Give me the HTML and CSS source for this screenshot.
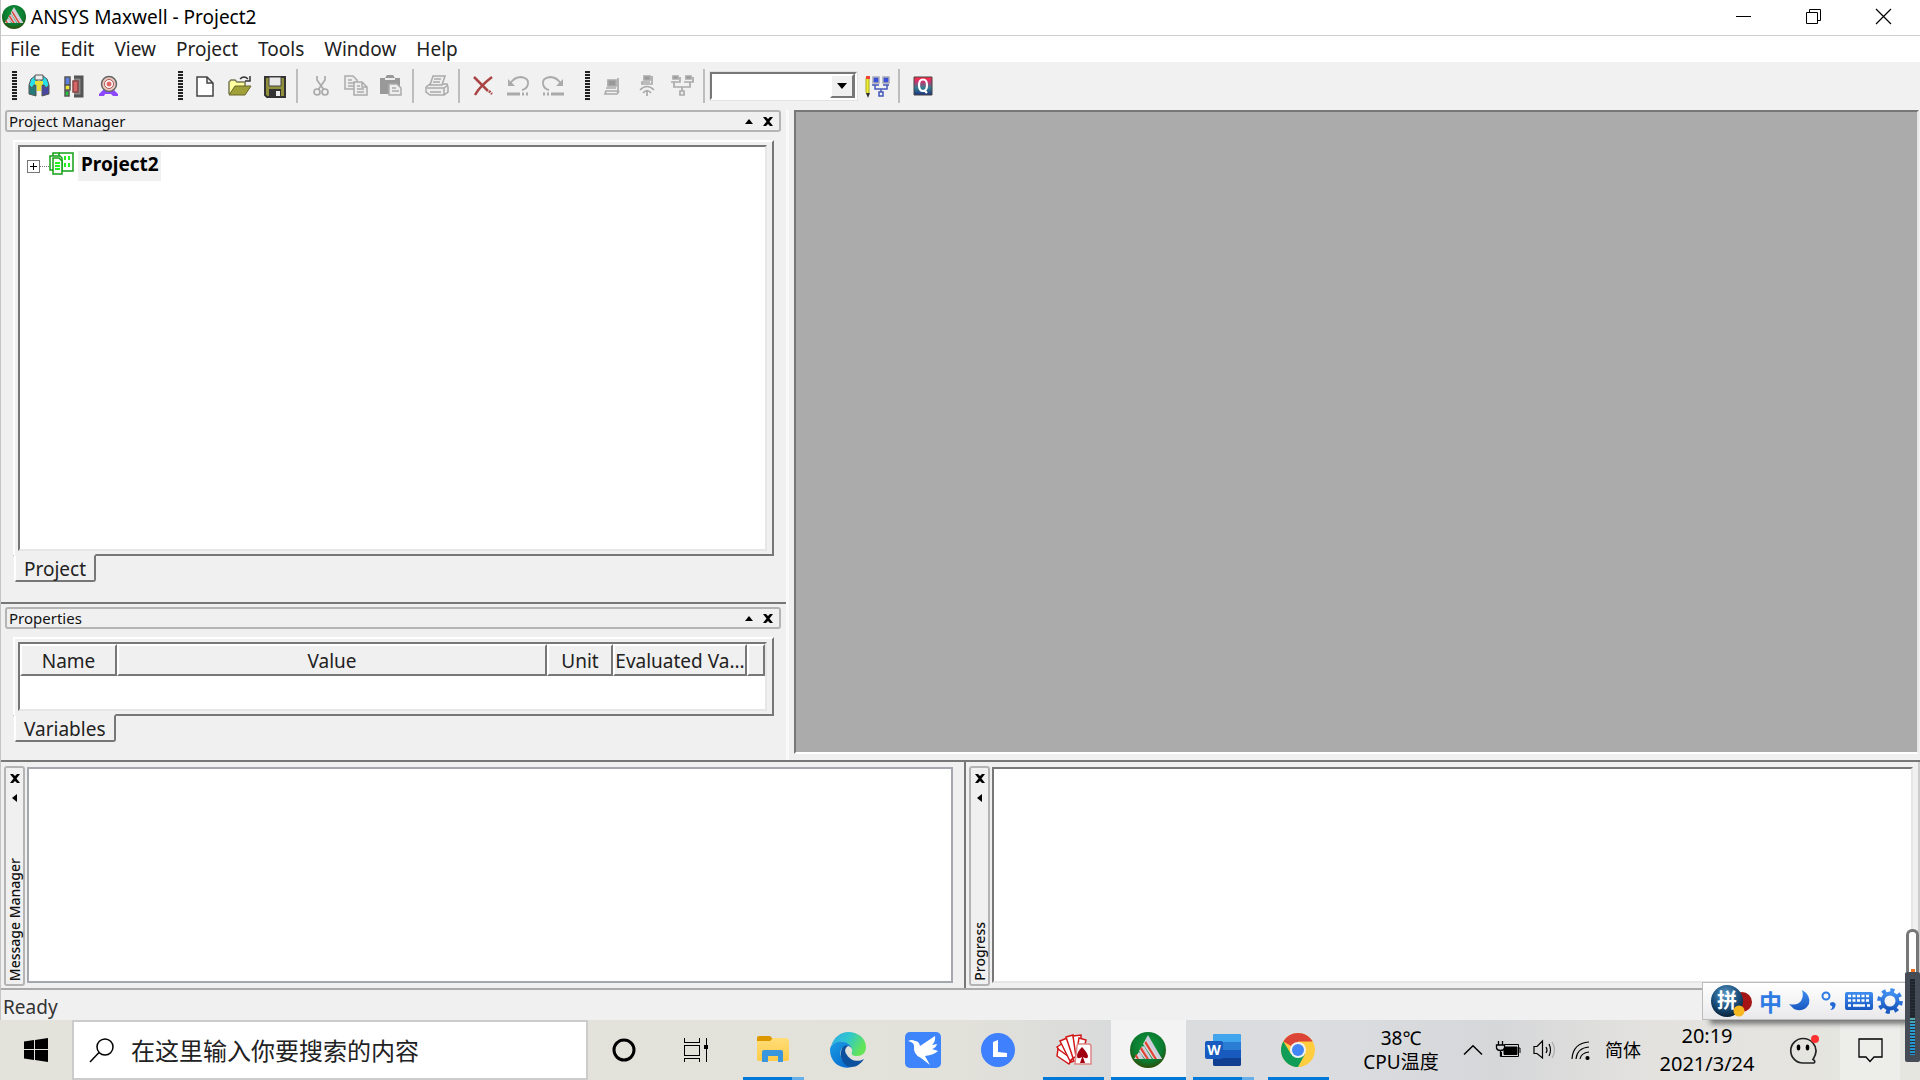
FILE: index.html
```html
<!DOCTYPE html>
<html lang="zh-CN">
<head>
<meta charset="utf-8">
<meta name="viewport" content="width=device-width, initial-scale=1">
<title>ANSYS Maxwell - Project2</title>
<link rel="stylesheet" href="styles.css">
</head>
<body>
<svg class="defs" aria-hidden="true">
  <defs>
    <radialGradient id="green" cx=".5" cy=".4" r=".6"><stop offset="0" stop-color="#0c9a3c"/><stop offset=".7" stop-color="#0b7a30"/><stop offset="1" stop-color="#2c4f08"/></radialGradient>
    <linearGradient id="edgeTop" x1="0" y1="0" x2="1" y2=".4"><stop offset="0" stop-color="#2fa8e8"/><stop offset=".5" stop-color="#2fc6cf"/><stop offset="1" stop-color="#63e457"/></linearGradient>
    <linearGradient id="edgeSide" x1="0" y1="0" x2=".6" y2="1"><stop offset="0" stop-color="#1a9de4"/><stop offset="1" stop-color="#0a6fd0"/></linearGradient>
    <linearGradient id="folder" x1="0" y1="0" x2="0" y2="1"><stop offset="0" stop-color="#ffdd78"/><stop offset="1" stop-color="#ffcb48"/></linearGradient>
    <radialGradient id="ball" cx=".45" cy=".3" r=".7"><stop offset="0" stop-color="#5a9bc8"/><stop offset=".6" stop-color="#1b4f7c"/><stop offset="1" stop-color="#0a2238"/></radialGradient>
    <linearGradient id="imeBlue" x1="0" y1="0" x2="0" y2="1"><stop offset="0" stop-color="#3f8df0"/><stop offset="1" stop-color="#1858c0"/></linearGradient>
    <linearGradient id="qbox" x1="0" y1="0" x2="0" y2="1"><stop offset="0" stop-color="#ff3040"/><stop offset=".25" stop-color="#d03070"/><stop offset=".6" stop-color="#308090"/><stop offset="1" stop-color="#203080"/></linearGradient>
    <symbol id="maxwell" viewBox="0 0 36 36">
      <circle cx="18" cy="18" r="18" fill="url(#green)"/>
      <path d="M4 27 9 20 13 27Z" fill="#d8d8dc"/>
      <path d="M9 19 12 14 21 27H15Z" fill="#d8d8dc"/>
      <path d="M13 12 17 5 32 27H23Z" fill="#d8d8dc"/>
      <path d="M8 21 10.500 20.500 14 27H11Z M12 15 14 14 22 27H19Z M16 7 18 3 32 27H29Z" fill="#ccd"/>
      <path d="M5 24 6.500 22 9 27H7Z M10 17 11.500 15 19 27H16.500Z M14.500 11 16 9 27 27H24.500Z" fill="#e04434"/>
    </symbol>
    <symbol id="close" viewBox="0 0 10 9"><path d="M0 0H3L5 2 7 0H10L6.500 4.500 10 9H7L5 7 3 9H0L3.500 4.500Z"/></symbol>
  </defs>
</svg>

<div class="window">
  <header class="titlebar">
    <svg class="app-icon" viewBox="0 0 36 36"><use href="#maxwell"/></svg>
    <h1 class="title">ANSYS Maxwell - Project2</h1>
    <div class="caption">
      <button class="cap" aria-label="Minimize"><svg width="15" height="15"><path d="M0 7.500H15" stroke="#000"/></svg></button>
      <button class="cap" aria-label="Restore"><svg width="15" height="15" fill="none" stroke="#000"><path d="M.5 3.500H11.500V14.500H.5ZM3.500 3V.5H14.500V11.500H12"/></svg></button>
      <button class="cap" aria-label="Close"><svg width="15" height="15"><path d="M0 0 15 15M15 0 0 15" stroke="#000" stroke-width="1.200"/></svg></button>
    </div>
  </header>

  <nav class="menubar">
    <button>File</button><button>Edit</button><button>View</button><button>Project</button><button>Tools</button><button>Window</button><button>Help</button>
  </nav>

  <div class="toolbar">
    <div class="group group-first">
      <span class="grip"></span>
      <button class="tool" aria-label="Find"><svg width="24" height="24" stroke="#555"><path d="M2 11V20L9 22V11Z" fill="#267a7a"/><path d="M15 11V22L22 20V11Z" fill="#4848a0"/><path d="M4 5 8 2 10 4V11H7L5 14 2 11Z" fill="#27dfe8"/><path d="M20 5 16 2 14 4V11H17L19 14 22 11Z" fill="#27dfe8"/><path d="M8 7H16V10L14 12V17H10V12L8 10Z" fill="#e5e138" stroke="none"/><path d="M8 1H16V6H8Z" fill="#eee"/></svg></button>
      <button class="tool" aria-label="Library"><svg width="24" height="24" stroke="#555" stroke-width="1.500"><path d="M12 3H20V22H12" fill="#888" stroke-width="3"/><path d="M3 3H8V11H3Z" fill="#5c80e0"/><path d="M3 11H8V16H3Z" fill="#eee63a"/><path d="M3 17H7V22H3Z" fill="#24cc38"/><path d="M11 7H16V18H11Z" fill="#d86868" stroke="#844"/></svg></button>
      <button class="tool" aria-label="Certificate"><svg width="24" height="24"><path d="M7 15 2 20V22H7L8 20H14L16 22H21V20L16 15Z" fill="#8b48ff"/><circle cx="12" cy="10" r="7.500" fill="#e9c8bf" stroke="#666" stroke-width="1.500"/><circle cx="12" cy="10" r="4.500" fill="#fff" stroke="#a55"/><circle cx="12" cy="10" r="2.500" fill="#e06868"/></svg></button>
    </div>
    <div class="group">
      <span class="grip"></span>
      <button class="tool" aria-label="New"><svg width="24" height="24"><path d="M4 3H14L20 9V22H4ZM14 3V9H20" fill="#fff" stroke="#444" stroke-width="1.500"/></svg></button>
      <button class="tool" aria-label="Open"><svg width="24" height="24"><path d="M1 20V8L3 6H7L9 8H17V12" fill="#ffffa0" stroke="#777755" stroke-width="1.500"/><path d="M1 21 7 12H23L17 21Z" fill="#a0a038" stroke="#666628"/><path d="M12 5Q16 1 20 5M22 2V7H17" fill="none" stroke="#333" stroke-width="1.500"/></svg></button>
      <button class="tool" aria-label="Save"><svg width="24" height="24"><path d="M2 3H22V23H4L2 21Z" fill="#90903c" stroke="#333" stroke-width="2"/><path d="M6 3H18V12H6Z" fill="#e9e9e9" stroke="#444"/><path d="M6 15H18V23H6Z" fill="#333"/><path d="M13 17H17V22H13Z" fill="#eee"/></svg></button>
      <span class="sep"></span>
      <button class="tool" aria-label="Cut"><svg width="24" height="24" fill="none" stroke="#aaa" stroke-width="1.700"><path d="M8 2V6L15 16M16 2V6L9 16"/><circle cx="8" cy="18" r="3"/><circle cx="16" cy="18" r="3"/></svg></button>
      <button class="tool" aria-label="Copy"><svg width="24" height="24" fill="#eee" stroke="#aaa" stroke-width="1.500"><path d="M1 2H9L13 6V15H1ZM4 6H8M4 9H10M4 12H10"/><path d="M10 8H18L23 13V21H10ZM18 8V13H23M13 12H16M13 15H20M13 18H20"/></svg></button>
      <button class="tool" aria-label="Paste"><svg width="24" height="24"><path d="M1 4H6L8 1H14L16 4H21V20H1Z" fill="#999"/><path d="M6 5H16" stroke="#eee" stroke-width="2"/><path d="M10 10H18L22 14V21H10Z" fill="#eee" stroke="#aaa" stroke-width="1.500"/><path d="M13 14H17M13 17H20" stroke="#aaa" stroke-width="1.500"/></svg></button>
      <span class="sep"></span>
      <button class="tool" aria-label="Print"><svg width="24" height="24" fill="#eee" stroke="#aaa" stroke-width="1.500"><path d="M1 13 5 10H22L23 13V18L19 21H5L1 18ZM2 14H19V21M19 14 23 11"/><path d="M5 11 8 2H20L17 11ZM9 5H16M8 8H15"/><path d="M5 18H16"/></svg></button>
      <span class="sep"></span>
      <button class="tool" aria-label="Delete"><svg width="24" height="24" fill="none" stroke="#a84444" stroke-width="2.500"><path d="M3 3 17 17M21 3Q9 12 4 21"/><path d="M18 17 21 20" stroke-dasharray="2 1"/></svg></button>
      <button class="tool" aria-label="Undo"><svg width="24" height="24" fill="none" stroke="#aaa" stroke-width="1.800"><path d="M4 10Q8 3 15 3 23 4 22 10 21 15 16 16"/><path d="M2 5V12H9Z" fill="#aaa" stroke="none"/><path d="M1 20H14M16 20H18M20 20H22" stroke-width="3"/></svg></button>
      <button class="tool" aria-label="Redo"><svg width="24" height="24" fill="none" stroke="#aaa" stroke-width="1.800"><path d="M20 10Q16 3 9 3 1 4 2 10 3 15 8 16"/><path d="M22 5V12H15Z" fill="#aaa" stroke="none"/><path d="M10 20H23M2 20H4M6 20H8" stroke-width="3"/></svg></button>
    </div>
    <div class="group">
      <span class="grip"></span>
      <button class="tool" aria-label="Local machine"><svg width="24" height="24" fill="none" stroke="#aaa" stroke-width="1.700"><path d="M8 6H16V12H8Z" fill="#999"/><path d="M18 4V17H6L5 20H17L19 17M6 14H16"/></svg></button>
      <button class="tool" aria-label="Remote machine"><svg width="24" height="24" fill="none" stroke="#aaa" stroke-width="1.700"><path d="M9 2H15V6H9Z" fill="#999"/><path d="M17 2V10H7V8H15M5 16Q12 9 19 16M8 19Q12 14 16 19M12 16V22"/></svg></button>
      <button class="tool" aria-label="Distributed"><svg width="24" height="24" fill="none" stroke="#aaa" stroke-width="1.700"><path d="M3 2H8V5H3ZM16 2H21V5H16Z" fill="#999"/><path d="M1 8H10V3M14 8H23V3M4 8V13H20V8M12 13V17M10 17H14V21H10Z"/></svg></button>
      <span class="sep"></span>
      <span class="combo"><select aria-label="Analysis configuration"><option></option></select><span class="combo-arrow"></span></span>
      <button class="tool" aria-label="Edit configuration"><svg width="26" height="24" fill="none"><path d="M2 4H5V18L4 22 2 18Z" fill="#f0ee30" stroke="#a9a920"/><path d="M2 2H6V5H2Z" fill="#e43"/><path d="M2 19H6L4 24Z" fill="#333"/><path d="M9 3H15V9H9ZM19 3H25V9H19Z" fill="#3b50d8" stroke="#aab" stroke-width="1.500"/><path d="M8 11H15M19 11H25M11 11V15H23V11M17 15V18M15 18H19V22H15Z" stroke="#4456b8" stroke-width="1.500"/></svg></button>
      <span class="sep"></span>
      <button class="tool" aria-label="Queue"><svg width="20" height="20"><path d="M1 1H19V19H1Z" fill="url(#qbox)" stroke="#444"/><path d="M10 3.500C7.500 3.500 6 5.500 6 9S7.500 15 10 15 14 12.500 14 9 12.500 3.500 10 3.500M11 14 14 17" fill="none" stroke="#fff" stroke-width="2.200"/></svg></button>
    </div>
  </div>

  <main class="workspace">
    <div class="docks">
      <section class="dock dock-project">
        <header class="dock-head"><h2>Project Manager</h2><button class="pin" aria-label="Collapse"></button><button class="x" aria-label="Close"><svg width="10" height="9"><use href="#close"/></svg></button></header>
        <div class="frame">
          <div class="sunken tree">
            <button class="expand" aria-label="Expand Project2"></button><span class="dots"></span>
            <svg width="25" height="23" fill="#fff" stroke="#16a016" stroke-width="1.500"><path d="M10 1H24V19H13"/><path d="M13 19V6L11 4H1V18H4"/><path d="M4 4V1H10V4" fill="none"/><path d="M4 6H10L13 9V22H4Z"/><path d="M6 11H11M6 14H11M6 17H11M16 4V8M20 4V8M16 11V15M20 11V15" stroke="#22f022" stroke-width="2"/></svg>
            <span class="node">Project2</span>
          </div>
        </div>
        <button class="tab">Project</button>
      </section>
      <section class="dock dock-props">
        <header class="dock-head"><h2>Properties</h2><button class="pin" aria-label="Collapse"></button><button class="x" aria-label="Close"><svg width="10" height="9"><use href="#close"/></svg></button></header>
        <div class="frame">
          <div class="sunken grid">
            <table>
              <colgroup><col class="c-name"><col><col class="c-unit"><col class="c-eval"><col class="c-end"></colgroup>
              <thead><tr><th>Name</th><th>Value</th><th>Unit</th><th>Evaluated Va...</th><th></th></tr></thead>
            </table>
          </div>
        </div>
        <button class="tab">Variables</button>
      </section>
    </div>
    <div class="mdi"></div>
  </main>

  <div class="bottom">
    <section class="side-dock">
      <header class="side-head"><button class="x" aria-label="Close"><svg width="10" height="9"><use href="#close"/></svg></button><button class="pin-left" aria-label="Collapse"></button><h2>Message Manager</h2></header>
      <div class="messages"></div>
    </section>
    <section class="side-dock side-progress">
      <header class="side-head"><button class="x" aria-label="Close"><svg width="10" height="9"><use href="#close"/></svg></button><button class="pin-left" aria-label="Collapse"></button><h2>Progress</h2></header>
      <div class="sunken progress"></div>
    </section>
  </div>
  <footer class="status">Ready</footer>
</div>

<div class="taskbar">
  <button class="start" aria-label="Start"><svg width="24" height="24"><path d="M0 3.500 10 2V11H0ZM11 2 24 0V11H11ZM0 12H10V22L0 20.500ZM11 12H24V24L11 22Z"/></svg></button>
  <div class="search">
    <svg width="25" height="25" fill="none" stroke="#000" stroke-width="1.500"><circle cx="16" cy="9" r="8"/><path d="M10 14.500 1 24"/></svg>
    <input type="text" aria-label="搜索" placeholder="在这里输入你要搜索的内容">
  </div>
  <button class="sys" aria-label="Cortana"><svg width="24" height="24"><circle cx="12" cy="12" r="10" fill="none" stroke="#000" stroke-width="3"/></svg></button>
  <button class="sys" aria-label="Task view"><svg width="25" height="24" fill="none" stroke="#000" shape-rendering="crispEdges"><path d="M1 0V4H16V0M1 7H16V17H1ZM1 24V20H16V24M23 0V24"/><path d="M21 7H24V10H21Z" fill="#000"/></svg></button>
  <div class="apps">
    <button class="app run multi" aria-label="File Explorer"><svg width="32" height="28"><path d="M0 2Q0 0 2 0H13L16 3 14 6H0Z" fill="#dd9800"/><path d="M0 5H13L16 2H30Q32 3 32 5V23Q32 25 30 25H2Q0 25 0 23Z" fill="url(#folder)"/><path d="M5 26V16Q5 14 7 14H24Q26 14 26 16V26H21V20H11V26Z" fill="#3a96dd"/></svg></button>
    <button class="app" aria-label="Edge"><svg width="36" height="36"><path d="M1 14C4 5 11 0 18 0 29 0 36 7 36 15 36 21 32 24 27 24 22 24 21 22 22 20 23 17 20 12 14 10 8 9 3 11 1 14Z" fill="url(#edgeTop)"/><path d="M0 18C0 12 7 8 14 10 19 11 22 15 22 18 22 16 20 14 17 14 12 14 9 19 11 25 13 31 18 34 22 35 10 38 0 30 0 18Z" fill="url(#edgeSide)"/><path d="M13 15C9 20 10 29 17 34 24 37 30 33 34 27 27 31 20 28 17 23 14 19 15 16 18 14 16 13 14 14 13 15Z" fill="#0d519e"/></svg></button>
    <button class="app" aria-label="Bird"><svg width="36" height="36"><rect width="36" height="36" rx="5" fill="#3e84fb"/><path d="M3 9Q7 7 10 9Q14 9 15 14L30 4Q31 9 27 13L32 12Q31 16 27 17L33 19Q29 23 20 24L25 33 16 26Q8 23 9 13Q8 10 3 9Z" fill="#fff"/></svg></button>
    <button class="app" aria-label="Lark"><svg width="36" height="36"><circle cx="18" cy="18" r="17" fill="#3f80ff"/><path d="M13 10 18 8V20L27 21V25H13Z" fill="#fff"/></svg></button>
    <button class="app run" aria-label="Solitaire"><svg width="36" height="32" fill="#fff" stroke="#d01818" stroke-width="1.500"><path d="M2 13 8 9 19 27 13 29Z"/><path d="M2 22 3 15 17 25 14 30Z"/><path d="M5 7 12 4 20 22 15 27Z"/><path d="M11 3 18 1 23 22 18 24Z"/><path d="M18 2 26 1 26 20 21 23Z"/><path d="M24 4 31 6 27 22 21 23Z"/><path d="M22 12Q22 10 24 10H34Q36 10 36 13V30H20Z" stroke="#d88"/><path d="M27 13Q22 18 22 22 22 26 27 23L25 29H30L28 23Q33 26 33 22 32 18 27 13Z" fill="#a00010" stroke="none"/></svg></button>
    <button class="app run active" aria-label="ANSYS Maxwell"><svg width="36" height="36"><use href="#maxwell"/></svg></button>
    <button class="app run multi" aria-label="Word"><svg width="36" height="33"><rect x="8" width="28" height="32" rx="2" fill="#185abd"/><path d="M8 8V2Q8 0 10 0H34Q36 0 36 2V8Z" fill="#41a5ee"/><path d="M8 8H36V16H8Z" fill="#2b7cd3"/><path d="M8 24H36V30Q36 32 34 32H10Q8 32 8 30Z" fill="#103f91"/><rect y="7" width="18" height="18" rx="2" fill="#185abd"/><text class="word-w" x="9" y="21" text-anchor="middle">W</text></svg></button>
    <button class="app run" aria-label="Chrome"><svg width="34" height="34"><circle cx="17" cy="17" r="17" fill="#ffcd40"/><path d="M17 17 2.300 8.500A17 17 0 0 1 31.700 8.500H17Z" fill="#db4437"/><path d="M2.300 8.500A17 17 0 0 0 17 34L24 21 17 17 10 21Z" fill="#0f9d58"/><circle cx="17" cy="17" r="8" fill="#f1f1f1"/><circle cx="17" cy="17" r="6" fill="#4285f4"/></svg></button>
  </div>
  <div class="tray">
    <div class="temp"><span>38℃</span><span>CPU温度</span></div>
    <button class="t-chevron" aria-label="Show hidden icons"><svg width="18" height="10"><path d="M0 9.500 9 .7 18 9.500" fill="none" stroke="#000" stroke-width="1.500"/></svg></button>
    <button class="t-icon" aria-label="Battery"><svg width="25" height="18" fill="none" stroke="#000"><path d="M8.500 3.500H22.500V15.500H5.500V11" /><path d="M9 6H21V13.500H8V9Z" fill="#000"/><path d="M23 7H24V12"/><path d="M2.500 0V4M6.500 0V4M.5 4H8.500V7Q8 9.500 4.500 9.500 1 9.500 .5 7ZM4.500 10V15H6" stroke-width="1.300"/></svg></button>
    <button class="t-icon" aria-label="Volume"><svg width="23" height="20" fill="none" stroke="#000" stroke-width="1.200"><path d="M1 6.500H4L9.500 1V18L4 13.500H1Z"/><path d="M13 7Q15 10 13 13M16 4Q19 10 16 16"/><path d="M19 2Q24 10 19 18" stroke="#aaa"/></svg></button>
    <button class="t-icon" aria-label="Network"><svg width="19" height="19" fill="none" stroke="#000" stroke-width="1.200"><path d="M1 18Q2 2 18 1M5 18Q6 7 18 6M9 18Q10 12 18 11"/><circle cx="16.500" cy="17" r="1.500" fill="#000"/></svg></button>
    <button class="t-lang">简体</button>
    <button class="clock"><span>20:19</span><span>2021/3/24</span></button>
    <button class="t-chat" aria-label="Chat"><svg width="32" height="30"><path d="M16 3.500A12 12 0 1 0 16 28H27Q29 26 26 24.500 32 15 26 8 22 3.500 16 3.500Z" fill="none" stroke="#222" stroke-width="1.700"/><ellipse cx="11.500" cy="12.500" rx="1.800" ry="3"/><ellipse cx="20.500" cy="12.500" rx="1.800" ry="3"/><circle cx="28" cy="4" r="4" fill="#ff3030"/></svg></button>
    <button class="t-notes" aria-label="Notifications"><svg width="25" height="24"><path d="M1 1H24V19H16L12 23.500 8 19H1Z" fill="none" stroke="#000" stroke-width="1.300"/></svg></button>
  </div>
</div>

<div class="ime">
  <svg width="40" height="34"><circle cx="31" cy="18" r="10" fill="#a41414"/><circle cx="16" cy="17" r="16" fill="url(#ball)"/><text class="ime-pin" x="16" y="24" text-anchor="middle">拼</text><circle cx="28" cy="27" r="5.500" fill="#f6b820"/></svg>
  <span class="ime-zh">中</span>
  <svg width="22" height="22"><path d="M13 0Q22 5 20 14 15 23 5 19L0 14Q8 16 12 11 15 6 13 0Z" fill="url(#imeBlue)"/></svg>
  <svg width="18" height="20"><circle cx="7" cy="5" r="3.500" fill="none" stroke="#2f7be4" stroke-width="2"/><path d="M11 13Q11 11 14 11 18 12 16 16 15 19 11 19 14 17 13 15 11 15 11 13Z" fill="#2468d4"/></svg>
  <svg width="28" height="18"><rect width="28" height="18" rx="2" fill="url(#imeBlue)"/><path d="M3 4H25M3 8.500H25" stroke="#fff" stroke-width="2.500" stroke-dasharray="3 1.500"/><path d="M3 13.500H6M8 13.500H20M22 13.500H25" stroke="#fff" stroke-width="2.500"/></svg>
  <svg width="26" height="26" fill="none" stroke="url(#imeBlue)"><circle cx="13" cy="13" r="7.500" stroke-width="4"/><circle cx="13" cy="13" r="10.800" stroke-width="4" stroke-dasharray="4 4.480"/></svg>
</div>
<div class="gauge"><span class="tube"></span><span class="meter"><i></i></span></div>
</body>
</html>
```
FILE: styles.css
```css
* { box-sizing: border-box; }
body {
  margin: 0;
  min-height: 100vh;
  display: flex;
  flex-direction: column;
  position: relative;
  overflow-x: hidden;
  background: #f0f0f0;
  color: #000;
  font-family: "Noto Sans", "Noto Sans CJK SC", sans-serif;
  font-size: 19px;
}
button {
  margin: 0;
  padding: 0;
  border: 0;
  background: none;
  color: inherit;
  font: inherit;
  flex: none;
  display: flex;
  align-items: center;
  justify-content: center;
}
h1, h2 { margin: 0; font-weight: 400; }
svg { flex: none; display: block; overflow: visible; }
.defs { position: absolute; width: 0; height: 0; }

.window { flex: 1; display: flex; flex-direction: column; border-left: 1px solid #c4c4c4; }

/* Title bar and menu */
.titlebar { height: 36px; display: flex; align-items: center; background: #fff; border-bottom: 1px solid #cfcfcf; }
.app-icon { width: 24px; height: 24px; margin: 0 5px 2px 1px; }
.title { flex: 1; font-size: 19px; line-height: 32px; padding-bottom: 2px; }
.caption { display: flex; padding: 0 2px 2px 0; }
.cap { width: 70px; height: 32px; }
.menubar { height: 26px; display: flex; gap: 20px; padding-left: 9px; background: #fff; color: #222; line-height: 26px; }

/* Tool bar */
.toolbar { height: 48px; display: flex; align-items: flex-start; padding: 7px 0 0 11px; background: #f1f1f1; }
.group { display: flex; align-items: center; height: 34px; margin-right: 15px; }
.group-first { margin-right: 52px; }
.grip { width: 5px; height: 30px; margin-right: 4px; background: repeating-linear-gradient(#222 0 2px, #e8e8e8 2px 3px); }
.tool { width: 35px; height: 34px; }
.sep { width: 2px; height: 34px; margin: 0 5px 0 4px; background: #bdbdbd; }
.combo { position: relative; width: 147px; height: 28px; margin-right: 2px; border: 2px solid; border-color: #777 #fff #fff #777; outline: 1px solid #e2e2e2; background: #fff; }
.combo select { appearance: none; width: 100%; height: 100%; border: 0; border-right: 2px solid #777; background: #fff; font: inherit; }
.combo-arrow { position: absolute; top: 0; right: 1px; width: 24px; height: 24px; background: #f0f0f0; border: 2px solid; border-color: #fff #777 #777 #fff; pointer-events: none; }
.combo-arrow::after { content: ""; position: absolute; left: 5px; top: 7px; border: 5px solid transparent; border-top: 6px solid #000; border-bottom: 0; }

/* Docked panels */
.workspace { flex: 1; display: grid; grid-template-columns: minmax(0, 793fr) minmax(0, 1126fr); border-bottom: 2px solid #777; }
.docks { display: flex; flex-direction: column; border-right: 5px solid #f0f0f0; box-shadow: inset -3px 0 #fafafa; padding-right: 3px; }
.dock { display: flex; flex-direction: column; align-items: stretch; padding: 0 5px 0 4px; }
.dock-project { flex: 1; padding-bottom: 20px; border-bottom: 2px solid #777; }
.dock-props { padding-top: 3px; padding-bottom: 18px; }
.dock-head { height: 22px; display: flex; align-items: center; padding: 0 5px 0 2px; border: 2px solid #b4b4b4; border-radius: 3px; }
.dock-head h2 { flex: 1; font-size: 15px; line-height: 16px; color: #111; }
.pin { width: 8px; height: 10px; margin-right: 9px; }
.pin::after { content: ""; border: 4px solid transparent; border-bottom: 5px solid #000; border-top: 0; }
.x { width: 12px; height: 12px; }
.frame { flex: 1; display: flex; margin: 8px 7px 0 8px; padding: 3px 5px 3px 3px; border: 2px solid; border-color: #fff #777 #777 #fff; }
.sunken { flex: 1; border: 2px solid; border-color: #777 #e6e6e6 #e6e6e6 #777; background: #fff; }
.tree { display: flex; align-items: flex-start; padding: 4px 0 0 7px; }
.expand { position: relative; width: 13px; height: 13px; margin-top: 9px; border: 1px solid #777; background: linear-gradient(#000, #000) center / 7px 1px no-repeat, linear-gradient(#000, #000) center / 1px 7px no-repeat; }
.dots { width: 9px; margin-top: 15px; border-top: 1px dotted #777; }
.tree svg { margin-top: 1px; }
.node { margin-left: 4px; padding: 0 2px 4px 3px; background: #f0f0f0; font-weight: 700; line-height: 26px; }
.tab { position: relative; align-self: flex-start; height: 28px; margin: -2px 0 0 9px; padding: 2px 8px 0; border: 2px solid; border-color: #f0f0f0 #777 #777 #fff; border-radius: 0 0 3px 3px; background: #f0f0f0; color: #222; line-height: 24px; }
.grid { height: 69px; }
.grid table { width: 100%; table-layout: fixed; border-collapse: separate; border-spacing: 0; }
.grid th { height: 32px; padding: 2px 0 0; overflow: hidden; border: 2px solid; border-color: #fff #777 #777 #fff; background: #f0f0f0; color: #222; font-weight: 400; line-height: 26px; white-space: nowrap; }
.c-name { width: 97px; }
.c-unit { width: 66px; }
.c-eval { width: 134px; }
.c-end { width: 18px; }
.mdi { margin: 0 1px 6px 0; border: 2px solid; border-color: #777 #e8e8e8 #fff #777; background: #ababab; }

/* Message and progress panels */
.bottom { height: 228px; display: grid; grid-template-columns: minmax(0, 965fr) minmax(0, 954fr); border-bottom: 2px solid #aaa; }
.side-dock { display: flex; gap: 2px; padding: 4px 11px 2px 3px; border-right: 2px solid #777; }
.side-progress { padding-right: 5px; border-right-color: #ccc; }
.side-head { width: 21px; display: flex; flex-direction: column; align-items: center; padding: 4px 0 3px; border: 2px solid #b4b4b4; border-radius: 3px; }
.side-head h2 { margin-top: auto; writing-mode: vertical-rl; transform: rotate(180deg); font-size: 14px; line-height: 17px; font-weight: 500; color: #111; }
.pin-left { width: 10px; height: 8px; margin-top: 10px; }
.pin-left::after { content: ""; border: 4px solid transparent; border-right: 5px solid #000; border-left: 0; }
.messages { flex: 1; margin: 1px 0 3px; border: 2px solid #a4a8ae; background: #fff; }
.progress { margin: 1px 0 3px; }
.status { padding: 4px 0 0 2px; line-height: 26px; color: #333; }

/* Task bar */
.taskbar { height: 60px; display: flex; background: linear-gradient(90deg, #e3e3dc 0, #e2e1da 50%, #d9dadb 58%, #dcdde0 68%, #d6d7d9 78%, #e3e2df 86%, #e6e6e0 100%); }
.start { width: 72px; }
.search { width: 516px; display: flex; align-items: center; gap: 17px; padding-left: 15px; border: 2px solid #ccc; background: #fff; }
.search input { flex: 1; min-width: 0; padding: 0; border: 0; outline: 0; background: none; font: 24px/32px "Noto Sans CJK SC", sans-serif; }
.search input::placeholder { color: #222; opacity: 1; }
.sys { width: 72px; padding-right: 1px; }
.apps { display: flex; margin-left: 4px; }
.app { position: relative; width: 75px; padding-right: 2px; }
.run::after { content: ""; position: absolute; left: 7px; right: 7px; bottom: 0; height: 3px; background: #0078d7; }
.multi::after { background: linear-gradient(90deg, #0078d7 49px, #66aee8 49px); }
.active { background: #f3f3f3; }
.active::after { left: 0; right: 0; }
.word-w { font: 700 14px "Open Sans", sans-serif; fill: #fff; }
.tray { flex: 1; display: flex; justify-content: flex-end; padding-right: 20px; font-size: 20px; line-height: 28px; }
.temp, .clock { display: flex; flex-direction: column; align-items: center; justify-content: center; }
.temp { width: 90px; margin-right: 10px; font-size: 19px; line-height: 24px; }
.t-chevron { width: 34px; }
.t-icon { width: 36px; }
.t-lang { width: 50px; font-size: 18px; }
.clock { width: 118px; }
.t-chat { width: 74px; }
.t-notes { width: 60px; background: #ededea; }

/* Floating input-method bar and the system gauge on the screen edge */
.ime { position: absolute; right: 0; bottom: 60px; width: 218px; height: 38px; display: flex; align-items: center; gap: 8px; padding-left: 8px; overflow: visible; border: 1px solid #bbb; background: linear-gradient(#fff, #e9e9ec); box-shadow: 8px 4px 5px #777; clip-path: inset(0 0 -10px 0); }
.ime > svg:last-child { margin-left: -4px; }
.ime-pin { font: 700 20px "Noto Sans CJK SC", sans-serif; fill: #fff; }
.ime-zh { width: 22px; color: #2f7be4; font: 700 23px/30px "Noto Sans CJK SC", sans-serif; }
.gauge { position: absolute; right: 0; bottom: 18px; width: 15px; display: flex; flex-direction: column; align-items: center; }
.tube { width: 13px; height: 43px; border: 3px solid #777; border-bottom: 0; border-radius: 6px 6px 0 0; background: linear-gradient(#fff 37px, #f37021 37px) center / 4px 100% no-repeat #fff; }
.meter { width: 15px; height: 90px; padding: 7px 5px; border-radius: 2px; background: #454c56; }
.meter i { display: block; height: 76px; background: repeating-linear-gradient(transparent 0 2px, #2a3038 2px 3px), linear-gradient(#20242c 38px, #5fb0a0 38px, #2f9fd0 46px, #2090d0); }
```
